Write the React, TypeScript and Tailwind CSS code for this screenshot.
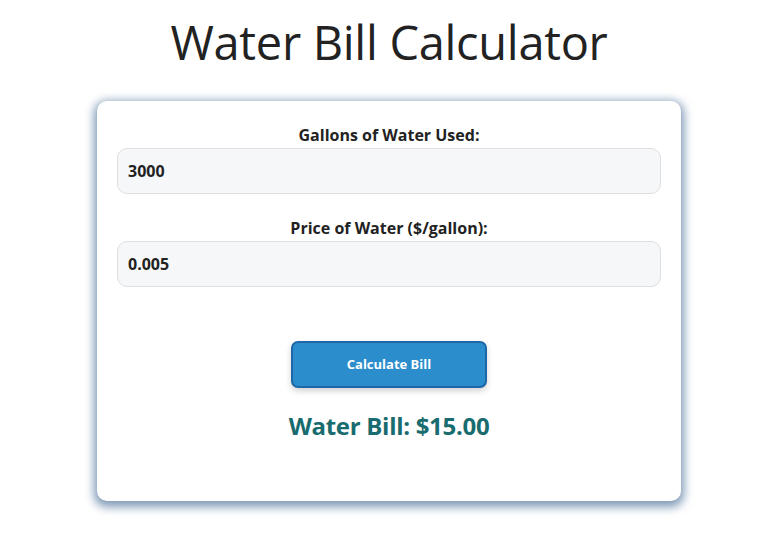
import React, { useState } from 'react';

const font = { fontFamily: '"Open Sans", "Noto Sans", "Liberation Sans", sans-serif' };

export default function App() {
  const [gallons, setGallons] = useState('3000');
  const [price, setPrice] = useState('0.005');
  const [bill, setBill] = useState(15);

  const calculate = () => {
    setBill((parseFloat(gallons) || 0) * (parseFloat(price) || 0));
  };

  return (
    <div className="min-h-screen bg-white flex flex-col items-center pl-[10px] text-[#222]" style={font}>
      {/* Title */}
      <h1 className="mt-[12px] text-[47px] leading-[60px] font-normal tracking-[-0.3px] text-[#222]">
        Water Bill Calculator
      </h1>

      {/* Card */}
      <div className="mt-[29px] w-[584px] h-[400px] bg-white rounded-[10px] px-5 pt-[24px] flex flex-col shadow-[0_3px_10px_3px_rgba(60,100,145,0.65)]">
        <label className="text-center text-[16px] leading-5 font-bold text-[#222]">Gallons of Water Used:</label>
        <input
          value={gallons}
          onChange={(e) => setGallons(e.target.value)}
          className="mt-[3px] h-[46px] w-full rounded-[10px] border border-[#dedfe2] bg-[#f6f7f9] px-[10px] text-[16px] font-bold text-[#222] outline-none"
        />

        <label className="mt-[24px] text-center text-[16px] leading-5 font-bold text-[#222]">Price of Water ($/gallon):</label>
        <input
          value={price}
          onChange={(e) => setPrice(e.target.value)}
          className="mt-[3px] h-[46px] w-full rounded-[10px] border border-[#dedfe2] bg-[#f6f7f9] px-[10px] text-[16px] font-bold text-[#222] outline-none"
        />

        <button
          onClick={calculate}
          className="mt-[54px] self-center w-[196px] h-[47px] rounded-[7px] bg-[#2b8dcc] border-2 border-[#1d67a8] text-white text-[13px] font-bold shadow-[0_3px_6px_rgba(0,0,0,0.18)]"
        >
          Calculate Bill
        </button>

        <div className="mt-[22px] text-center text-[24px] leading-[32px] font-bold tracking-[-0.3px] text-[#186b6e]">
          Water Bill: ${bill.toFixed(2)}
        </div>
      </div>
    </div>
  );
}
